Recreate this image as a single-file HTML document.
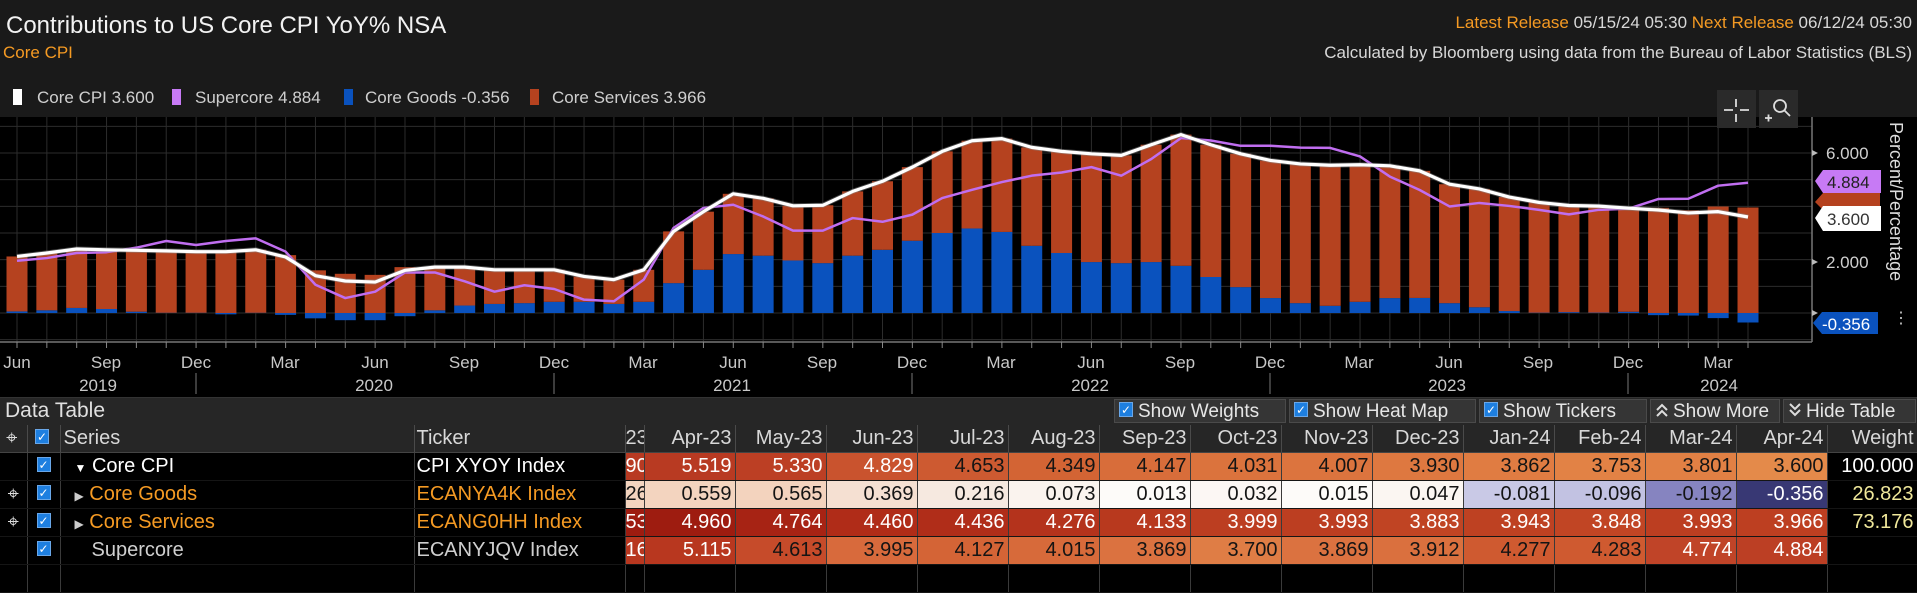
<!DOCTYPE html>
<html><head><meta charset="utf-8">
<style>
body{margin:0;width:1917px;height:577px;background:#000;overflow:hidden;font-family:"Liberation Sans",sans-serif;position:relative}
svg text{font-family:"Liberation Sans",sans-serif}
#bar{position:absolute;left:0;top:397px;width:1917px;height:27px;background:#262626;border-top:1px solid #333}
#bar .t{position:absolute;left:5px;top:1px;font-size:21px;color:#e0e0e0}
.btn{position:absolute;top:1px;height:24px;background:#353535;border:1px solid #4a4a4a;color:#e6e6e6;font-size:19px;line-height:24px;white-space:nowrap;box-sizing:border-box;padding-left:4px}
.btn svg{vertical-align:middle;position:relative;top:-2px;margin-right:4px}
.cb{display:inline-block;width:14px;height:15px;background:#1e7fe0;border:1px solid #6aa7e8;color:#fff;font-size:12px;line-height:15px;text-align:center;vertical-align:middle;margin-right:5px;position:relative;top:-2px;box-sizing:border-box}
table{position:absolute;left:0;top:425px;border-collapse:collapse;table-layout:fixed;width:1917px}
td{padding:0;height:28px;font-size:20px;white-space:nowrap;overflow:hidden;border-right:1px solid #3a3a3a;border-bottom:1px solid #151515;box-sizing:border-box}
tr.h td{height:27px;background:#262626;color:#d8d8d8;text-align:right;padding-right:3px;border-bottom:1px solid #444;border-right:1px solid #4a4a4a}
tr.h td.l{text-align:left}
td.n{text-align:right;padding-right:3px}
td.k{background:#000}
.w{color:#fff}.d{color:#141414}
.o{color:#f59a23}
</style></head><body>
<svg id="c" width="1917" height="397" style="position:absolute;left:0;top:0">
<rect width="1917" height="117" fill="#1a1a1a"/>
<rect y="117" width="1917" height="280" fill="#000"/>
<text x="6" y="33" font-size="24" fill="#f2f2f2">Contributions to US Core CPI YoY% NSA</text>
<text x="3" y="58" font-size="17" fill="#f59a23">Core CPI</text>
<text x="1912" y="28" font-size="17" text-anchor="end" fill="#d8d8d8"><tspan fill="#f59a23">Latest Release</tspan> 05/15/24 05:30  <tspan fill="#f59a23">Next Release</tspan> 06/12/24 05:30</text>
<text x="1912" y="58" font-size="17" text-anchor="end" fill="#d8d8d8">Calculated by Bloomberg using data from the Bureau of Labor Statistics (BLS)</text>
<rect x="13" y="89" width="9" height="16" fill="#fff"/>
<text x="37" y="103" font-size="17" fill="#cfcfcf">Core CPI  3.600</text>
<rect x="172" y="89" width="9" height="16" fill="#c77af5"/>
<text x="195" y="103" font-size="17" fill="#cfcfcf">Supercore  4.884</text>
<rect x="344" y="89" width="9" height="16" fill="#0a52be"/>
<text x="365" y="103" font-size="17" fill="#cfcfcf">Core Goods  -0.356</text>
<rect x="530" y="89" width="9" height="16" fill="#b5421f"/>
<text x="552" y="103" font-size="17" fill="#cfcfcf">Core Services  3.966</text>
<g id="grid" stroke="#2c2c2c" stroke-width="1"></g>
<g id="bars"></g>
<polyline id="sc" fill="none" stroke="#c06ef0" stroke-width="2.5" stroke-linejoin="round"/>
<polyline id="cc2" fill="none" stroke="#888" stroke-width="5" stroke-linejoin="round" opacity=".5"/>
<polyline id="cc" fill="none" stroke="#fff" stroke-width="3.2" stroke-linejoin="round"/>
<line x1="0" y1="342" x2="1812" y2="342" stroke="#777" stroke-width="1.5"/>
<line x1="1812" y1="117" x2="1812" y2="342" stroke="#777" stroke-width="1.5"/>
<g id="ticks" stroke="#888" stroke-width="1"></g>
<g font-size="17" fill="#cfcfcf">
<path d="M1812 150 l6 3 l-6 3z M1812 259 l6 3 l-6 3z M1812 310 l6 3 l-6 3z" fill="#bbb"/>
<text x="1826" y="159">6.000</text>
<text x="1826" y="268">2.000</text>
</g>
<polygon points="1815,181 1823,170 1881,170 1881,193 1823,193" fill="#c77af5"/>
<text x="1827" y="188" font-size="17" fill="#222">4.884</text>
<polygon points="1815,202 1823,193 1880,193 1880,210 1823,210" fill="#b5421f"/>
<polygon points="1815,218 1823,206 1881,206 1881,231 1823,231" fill="#fff"/>
<text x="1827" y="225" font-size="17" fill="#333">3.600</text>
<polygon points="1813,323 1822,312 1878,312 1878,334 1822,334" fill="#0a52be"/>
<text x="1822" y="330" font-size="17" fill="#fff">-0.356</text>
<text x="1893" y="323" font-size="16" fill="#ccc">⋮</text>
<text transform="translate(1890,122) rotate(90)" font-size="18" fill="#ddd">Percent/Percentage</text>
<rect x="1717" y="90" width="39" height="38" fill="#2a2a2a"/>
<path d="M1724 110h9M1740 110h9M1736 99v8M1736 114v8" stroke="#ddd" stroke-width="1.8"/>
<rect x="1759" y="90" width="39" height="38" fill="#2a2a2a"/>
<circle cx="1780" cy="106" r="6" fill="none" stroke="#ddd" stroke-width="1.8"/>
<path d="M1784 110l6 6M1765 118h7M1768.5 114.5v7" stroke="#ddd" stroke-width="1.8"/>
<g font-size="17" fill="#c8c8c8" text-anchor="middle">
<text x="98" y="391">2019</text><text x="374" y="391">2020</text><text x="732" y="391">2021</text><text x="1090" y="391">2022</text><text x="1447" y="391">2023</text><text x="1719" y="391">2024</text>
<text x="17" y="368">Jun</text><text x="106" y="368">Sep</text><text x="196" y="368">Dec</text><text x="285" y="368">Mar</text><text x="375" y="368">Jun</text><text x="464" y="368">Sep</text><text x="554" y="368">Dec</text><text x="643" y="368">Mar</text><text x="733" y="368">Jun</text><text x="822" y="368">Sep</text><text x="912" y="368">Dec</text><text x="1001" y="368">Mar</text><text x="1091" y="368">Jun</text><text x="1180" y="368">Sep</text><text x="1270" y="368">Dec</text><text x="1359" y="368">Mar</text><text x="1449" y="368">Jun</text><text x="1538" y="368">Sep</text><text x="1628" y="368">Dec</text><text x="1718" y="368">Mar</text>
</g>
<path d="M196 373v21M554 373v21M912 373v21M1270 373v21M1628 373v21" stroke="#777" stroke-width="1"/>
</svg>

<div id="bar"><span class="t">Data Table</span>
<div class="btn" style="left:1114px;width:172px"><span class="cb">✓</span>Show Weights</div>
<div class="btn" style="left:1289px;width:187px"><span class="cb">✓</span>Show Heat Map</div>
<div class="btn" style="left:1479px;width:168px"><span class="cb">✓</span>Show Tickers</div>
<div class="btn" style="left:1650px;width:130px"><svg width="14" height="14"><path d="M2 7l5-5 5 5M2 13l5-5 5 5" fill="none" stroke="#ddd" stroke-width="2"/></svg>Show More</div>
<div class="btn" style="left:1783px;width:133px"><svg width="14" height="14"><path d="M2 1l5 5 5-5M2 7l5 5 5-5" fill="none" stroke="#ddd" stroke-width="2"/></svg>Hide Table</div>
</div>

<table>
<colgroup><col style="width:27px"><col style="width:33px"><col style="width:354px"><col style="width:211px"><col style="width:19px">
<col style="width:91px"><col style="width:91px"><col style="width:91px"><col style="width:91px"><col style="width:91px"><col style="width:91px"><col style="width:91px"><col style="width:91px"><col style="width:91px"><col style="width:91px"><col style="width:91px"><col style="width:91px"><col style="width:91px"><col style="width:90px"></colgroup>
<tr class="h"><td class="l" style="text-align:center;color:#ddd">⌖</td><td class="l" style="text-align:center"><span class="cb" style="margin:0">✓</span></td><td class="l" style="padding-left:3px">Series</td><td class="l" style="padding-left:2px">Ticker</td><td>23</td><td>Apr-23</td><td>May-23</td><td>Jun-23</td><td>Jul-23</td><td>Aug-23</td><td>Sep-23</td><td>Oct-23</td><td>Nov-23</td><td>Dec-23</td><td>Jan-24</td><td>Feb-24</td><td>Mar-24</td><td>Apr-24</td><td>Weight</td></tr>
<tr><td class="k"></td><td class="k" style="text-align:center"><span class="cb" style="margin:0">✓</span></td><td class="k" style="color:#fff;padding-left:14px"><span style="font-size:12px">▼</span> Core CPI</td><td class="k" style="color:#fff;padding-left:2px">CPI XYOY Index</td>
<td class="n w" style="background:#b83a22">90</td><td class="n w" style="background:#b83a22">5.519</td><td class="n w" style="background:#bc3f24">5.330</td><td class="n w" style="background:#c9532e">4.829</td><td class="n d" style="background:#cd5a31">4.653</td><td class="n d" style="background:#d36434">4.349</td><td class="n d" style="background:#d86d3a">4.147</td><td class="n d" style="background:#db733d">4.031</td><td class="n d" style="background:#dc743e">4.007</td><td class="n d" style="background:#de7840">3.930</td><td class="n d" style="background:#e07c42">3.862</td><td class="n d" style="background:#e28245">3.753</td><td class="n d" style="background:#e18044">3.801</td><td class="n d" style="background:#e48a4a">3.600</td><td class="n k" style="color:#fff">100.000</td></tr>
<tr><td class="k" style="color:#ddd;text-align:center">⌖</td><td class="k" style="text-align:center"><span class="cb" style="margin:0">✓</span></td><td class="k o" style="padding-left:14px"><span style="font-size:12px;color:#ccc">▶</span> Core Goods</td><td class="k o" style="padding-left:2px">ECANYA4K Index</td>
<td class="n d" style="background:#f3d4bf">26</td><td class="n d" style="background:#f3d4bf">0.559</td><td class="n d" style="background:#f3d3be">0.565</td><td class="n d" style="background:#f5e0d2">0.369</td><td class="n d" style="background:#f6e9e0">0.216</td><td class="n d" style="background:#faf3ee">0.073</td><td class="n d" style="background:#fdfbf9">0.013</td><td class="n d" style="background:#fcf7f4">0.032</td><td class="n d" style="background:#fdfbf9">0.015</td><td class="n d" style="background:#fbf6f2">0.047</td><td class="n d" style="background:#c9c9e6">-0.081</td><td class="n d" style="background:#c2c2e2">-0.096</td><td class="n d" style="background:#8684c0">-0.192</td><td class="n w" style="background:#383874">-0.356</td><td class="n k" style="color:#efe79a">26.823</td></tr>
<tr><td class="k" style="color:#ddd;text-align:center">⌖</td><td class="k" style="text-align:center"><span class="cb" style="margin:0">✓</span></td><td class="k o" style="padding-left:14px"><span style="font-size:12px;color:#ccc">▶</span> Core Services</td><td class="k o" style="padding-left:2px">ECANG0HH Index</td>
<td class="n w" style="background:#9e1c10">53</td><td class="n w" style="background:#9e1c10">4.960</td><td class="n w" style="background:#a72314">4.764</td><td class="n w" style="background:#b02c18">4.460</td><td class="n w" style="background:#b02d19">4.436</td><td class="n w" style="background:#b4331c">4.276</td><td class="n w" style="background:#b8391e">4.133</td><td class="n w" style="background:#bc3e21">3.999</td><td class="n w" style="background:#bc3e21">3.993</td><td class="n w" style="background:#c04423">3.883</td><td class="n w" style="background:#be4122">3.943</td><td class="n w" style="background:#c14524">3.848</td><td class="n w" style="background:#bc3e21">3.993</td><td class="n w" style="background:#bd3f21">3.966</td><td class="n k" style="color:#efe79a">73.176</td></tr>
<tr><td class="k"></td><td class="k" style="text-align:center"><span class="cb" style="margin:0">✓</span></td><td class="k" style="color:#cfcfcf;padding-left:31px">Supercore</td><td class="k" style="color:#cfcfcf;padding-left:2px">ECANYJQV Index</td>
<td class="n w" style="background:#b8371f">16</td><td class="n w" style="background:#b8371f">5.115</td><td class="n d" style="background:#c64b2a">4.613</td><td class="n d" style="background:#d86a3c">3.995</td><td class="n d" style="background:#d46436">4.127</td><td class="n d" style="background:#d76a3a">4.015</td><td class="n d" style="background:#db7240">3.869</td><td class="n d" style="background:#df7d45">3.700</td><td class="n d" style="background:#db7240">3.869</td><td class="n d" style="background:#da703e">3.912</td><td class="n d" style="background:#cf5a30">4.277</td><td class="n d" style="background:#cf5a30">4.283</td><td class="n w" style="background:#c04428">4.774</td><td class="n w" style="background:#bc3f24">4.884</td><td class="n k"></td></tr>
<tr><td class="k" style="height:14px"></td><td class="k"></td><td class="k"></td><td class="k"></td><td class="k"></td><td class="k"></td><td class="k"></td><td class="k"></td><td class="k"></td><td class="k"></td><td class="k"></td><td class="k"></td><td class="k"></td><td class="k"></td><td class="k"></td><td class="k"></td><td class="k"></td><td class="k"></td><td class="k"></td></tr>
</table>

<script>
(function(){
var ns="http://www.w3.org/2000/svg";
var core=[2.12,2.25,2.4,2.37,2.35,2.33,2.3,2.3,2.37,2.1,1.4,1.2,1.16,1.6,1.72,1.72,1.62,1.62,1.62,1.37,1.25,1.62,3.06,3.8,4.47,4.3,4.02,4.04,4.56,4.94,5.47,6.06,6.46,6.54,6.21,6.06,5.97,5.91,6.31,6.69,6.31,5.97,5.72,5.59,5.54,5.56,5.519,5.33,4.829,4.653,4.349,4.147,4.031,4.007,3.93,3.862,3.753,3.801,3.6];
var goods=[.06,.1,.19,.15,.05,.01,.01,-.05,.01,-.07,-.2,-.27,-.27,-.12,.1,.28,.34,.37,.42,.42,.34,.42,1.12,1.62,2.21,2.15,1.97,1.87,2.15,2.37,2.71,3.0,3.17,3.04,2.52,2.25,1.91,1.87,1.91,1.77,1.35,.97,.56,.37,.27,.42,.559,.565,.369,.216,.073,.013,.032,.015,.047,-.081,-.096,-.192,-.356];
var sup=[1.96,2.06,2.25,2.28,2.45,2.7,2.55,2.7,2.8,2.3,1.06,.56,.8,1.52,1.52,1.19,.8,1.04,.9,.5,.44,1.25,3.19,3.94,4.06,3.62,3.09,3.09,3.56,3.42,3.69,4.31,4.62,4.91,5.15,5.27,5.47,5.15,5.77,6.56,6.47,6.27,6.27,6.2,6.19,5.87,5.115,4.613,3.995,4.127,4.015,3.869,3.7,3.869,3.912,4.277,4.283,4.774,4.884];
function X(i){return 17+i*29.845}
function Y(v){return 313-v*26.667}
function el(n,a,p){var e=document.createElementNS(ns,n);for(var k in a)e.setAttribute(k,a[k]);p.appendChild(e);return e}
var g=document.getElementById('grid'),b=document.getElementById('bars'),t=document.getElementById('ticks');
for(var i=0;i<59;i++){el('line',{x1:X(i),y1:117,x2:X(i),y2:342},g);el('line',{x1:X(i),y1:342,x2:X(i),y2:348},t);}
for(var k=-1;k<=7;k++){el('line',{x1:0,y1:Y(k),x2:1812,y2:Y(k)},g);}
for(var i=0;i<59;i++){
 var gd=goods[i],s=core[i]-gd,x=X(i)-10.5;
 if(gd>=0){el('rect',{x:x,y:Y(gd),width:21,height:gd*26.667,fill:'#0a52be'},b);el('rect',{x:x,y:Y(gd+s),width:21,height:s*26.667,fill:'#b5421f'},b);}
 else{el('rect',{x:x,y:313,width:21,height:-gd*26.667,fill:'#0a52be'},b);el('rect',{x:x,y:Y(s),width:21,height:s*26.667,fill:'#b5421f'},b);}
}
var pc='',ps='';
for(var i=0;i<59;i++){pc+=X(i)+','+Y(core[i])+' ';ps+=X(i)+','+Y(sup[i])+' ';}
document.getElementById('cc').setAttribute('points',pc);
document.getElementById('cc2').setAttribute('points',pc);
document.getElementById('sc').setAttribute('points',ps);
})();
</script>
</body></html>
